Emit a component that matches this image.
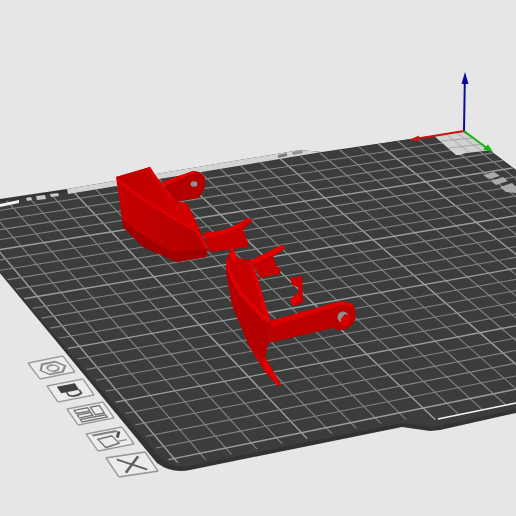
import React from "react";

type Pt = [number, number];

// bed corners on screen: left, origin, right, front
const corners: Pt[] = [
  [-54, 209],
  [464, 131],
  [760, 353],
  [167, 475],
];

// solve the projective map from the unit square to the bed quad
function makeHomography(q: Pt[]) {
  const [[x0, y0], [x1, y1], [x2, y2], [x3, y3]] = q;
  const dx1 = x1 - x2;
  const dx2 = x3 - x2;
  const dx3 = x0 - x1 + x2 - x3;
  const dy1 = y1 - y2;
  const dy2 = y3 - y2;
  const dy3 = y0 - y1 + y2 - y3;
  const det = dx1 * dy2 - dx2 * dy1;
  const g = (dx3 * dy2 - dx2 * dy3) / det;
  const h = (dx1 * dy3 - dx3 * dy1) / det;
  const a = x1 - x0 + g * x1;
  const b = x3 - x0 + h * x3;
  const d = y1 - y0 + g * y1;
  const e = y3 - y0 + h * y3;
  return (u: number, v: number): Pt => {
    const w = g * u + h * v + 1;
    return [(a * u + b * v + x0) / w, (d * u + e * v + y0) / w];
  };
}

const bed = makeHomography(corners);

function GridLines() {
  const lines: React.ReactNode[] = [];
  // spacing and offset measured off the reference
  for (let k = 0; k < 25; k++) {
    const u = 0.0271 + 0.0397 * k;
    const [ax, ay] = bed(u, 0);
    const [bx, by] = bed(u, 1);
    const major = k % 5 === 0;
    lines.push(
      <line key={`c${k}`} x1={ax} y1={ay} x2={bx} y2={by} stroke={major ? "#9c9e9d" : "#828483"} strokeWidth={major ? 1.4 : 1.1} />
    );
  }
  for (let k = 1; k < 26; k++) {
    const v = 0.0384 * k;
    const [ax, ay] = bed(0, v);
    const [bx, by] = bed(1, v);
    const major = k % 5 === 0;
    lines.push(
      <line key={`r${k}`} x1={ax} y1={ay} x2={bx} y2={by} stroke={major ? "#9c9e9d" : "#828483"} strokeWidth={major ? 1.4 : 1.1} />
    );
  }
  return <g filter="url(#faint)">{lines}</g>;
}

// one tilted button of the left toolbar, drawn in a local 40x20 box
function ToolButton({ m, children }: { m: string; children: React.ReactNode }) {
  return (
    <g transform={`matrix(${m})`}>
      <rect x="0" y="0" width="40" height="20" fill="#ececec" stroke="#989898" strokeWidth="1.6" rx="1" />
      {children}
    </g>
  );
}

function Toolbar() {
  return (
    <g filter="url(#soft)">
      <ToolButton m="0.875 -0.175 0.6 0.8 28 363">
        <polygon points="7,11 13,4.5 28,4.5 35,11 28,17 13,17" fill="none" stroke="#8c8c8c" strokeWidth="2" />
        <ellipse cx="21" cy="11" rx="6" ry="3.6" fill="none" stroke="#8c8c8c" strokeWidth="1.8" />
      </ToolButton>
      <ToolButton m="0.9 -0.175 0.55 0.8 47 386">
        <path d="M9 3 H29 V11 H9 Z" fill="#3f3f3f" />
        <path d="M15 11 V15 Q21 19 29 15 V11" fill="none" stroke="#4f4f4f" strokeWidth="2" />
      </ToolButton>
      <ToolButton m="0.9 -0.175 0.55 0.8 67 409">
        <rect x="6" y="3" width="15" height="4" fill="none" stroke="#707070" strokeWidth="1.5" />
        <rect x="6" y="9" width="15" height="3.4" fill="none" stroke="#707070" strokeWidth="1.5" />
        <rect x="24" y="3" width="10" height="9.4" fill="none" stroke="#707070" strokeWidth="1.5" />
        <rect x="6" y="14.5" width="28" height="3" fill="none" stroke="#707070" strokeWidth="1.5" />
      </ToolButton>
      <ToolButton m="0.9 -0.175 0.6 0.85 86 434">
        <path d="M5 3 H32" stroke="#808080" strokeWidth="2.2" />
        <polygon points="8,8 24,7 26,16 10,18" fill="none" stroke="#707070" strokeWidth="1.6" />
        <path d="M28 10 L34 4" stroke="#4f4f4f" strokeWidth="2.6" />
        <path d="M27 14 H36" stroke="#909090" strokeWidth="1.6" />
      </ToolButton>
      <ToolButton m="0.975 -0.15 0.65 0.95 106 458">
        <path d="M9 3 L31 17 M31 3 L9 17" stroke="#606060" strokeWidth="2" />
      </ToolButton>
    </g>
  );
}

function Bed() {
  const outline =
    "M-54 208 L0 199 L67 189 L300 150 L322 152 L464 131 L760 353 L516 413 L440 430 L430 431 L402 427 L190 470 Q172 474 157 463 Z";
  const face =
    "M-54 210 L464 131 L760 353 L516 409 L440 426 L430 427 L402 423 L190 466 Q174 469 161 459 Z";
  return (
    <g>
      <path d={outline} fill="#313332" />
      <path d={face} fill="#3b3d3c" />
      <clipPath id="bedclip">
        <path d="M-54 210 L464 131 L760 353 L516 405 L440 422 L430 423 L402 419 L190 463 Q176 465 164 457 Z" />
      </clipPath>
      <g clipPath="url(#bedclip)">
        <GridLines />
      </g>
      {/* corner patch beside the axes */}
      <polygon points="433,135 463,132 493,150 466,153 460,155 456,155" fill="#d0d2d0" />
      <g stroke="#a6a8a7" strokeWidth="1">
        <line x1="446" y1="134" x2="470" y2="153" />
        <line x1="457" y1="133" x2="482" y2="151" />
        <line x1="441" y1="141" x2="474" y2="138" />
        <line x1="449" y1="148" x2="484" y2="144" />
      </g>
      {/* strip along the back edge */}
      <polygon points="67,189 300,150 322,152 68,194" fill="#d2d4d2" />
      <polygon points="278,155 287,153 287,156 278,158" fill="#555" opacity="0.7" />
      <polygon points="292,152 302,150 303,153 293,155" fill="#777" opacity="0.7" />
      <polygon points="0,204 19,200 19,203 0,207" fill="#f4f4f4" />
      <g fill="#c8c8c8" filter="url(#soft)">
        <polygon points="26,198 31,197 32,200 27,201" />
        <polygon points="36,196 45,195 46,199 37,200" />
        <polygon points="50,194 58,193 59,196 51,197" />
      </g>
      {/* label on the right side of the bed */}
      <g fill="#a9abaa" filter="url(#soft)">
        <polygon points="483,175 494,172 500,176 489,179" />
        <polygon points="491,181 503,177 508,181 496,185" />
        <polygon points="500,187 512,183 516,187 516,193 506,192" />
      </g>
      {/* white mark near the front */}
      <line x1="438" y1="419" x2="516" y2="403" stroke="#f5f5f5" strokeWidth="1.6" />
    </g>
  );
}

function PartOne() {
  return (
    <g filter="url(#faint)">
      {/* ear */}
      <path d="M162 182 L193 171 Q203 171 205 179 Q207 190 198 198 L176 202 Z" fill="#b40000" />
      <path d="M162 182 L193 171 L196 172 L165 186 Z" fill="#dc0000" />
      <ellipse cx="194" cy="184" rx="3.4" ry="2.8" fill="#8f9190" />
      {/* arm */}
      <path d="M203 233 Q228 232 247 218 L253 220 L243 230 L248 242 L248 247 L210 252 Z" fill="#c60000" />
      <path d="M203 233 Q228 232 247 218 L253 220 L246 222 Q228 236 205 238 Z" fill="#e00000" />
      {/* body */}
      <path d="M116 177 L150 167 L155 175 L176 202 L187 203 L208 248 L206 257 L177 262 L143 247 L123 227 Z" fill="url(#lower)" />
      <path d="M116 177 L150 167 L155 175 L176 202 L187 203 L200 230 L193 228 Q150 205 117 178 Z" fill="url(#upper)" />
      <path d="M122 218 Q145 240 173 252 L207 248 L206 257 L177 262 L143 247 L123 227 Z" fill="#a20000" />
      <path d="M117 178 Q150 205 200 232 L208 248 L206 250 L196 232 Q150 208 117 181 Z" fill="#e40000" />
      <path d="M150 167 L155 175 L176 202 L173 202 L148 169 Z" fill="#e20000" />
    </g>
  );
}

function PartTwo() {
  return (
    <g filter="url(#faint)">
      {/* upper arm */}
      <path d="M252 260 L282 245 L285 248 L273 257 L277 267 L281 268 L280 274 L260 278 Z" fill="#c40000" />
      <path d="M252 260 L282 245 L285 248 L254 264 Z" fill="#e60000" />
      {/* small clip */}
      <path d="M290 278 L302 276 L303 303 L293 306 L290 300 L298 293 L298 287 L292 285 Z" fill="#c80000" />
      <path d="M290 300 L298 293 L299 297 L293 306 Z" fill="#e40000" />
      {/* long arm with the hole */}
      <path d="M270 321 L337 302 Q348 300 354 306 Q358 318 353 323 Q348 331 338 330 L333 328 L268 343 Z" fill="#bc0000" />
      <path d="M270 321 L337 302 Q348 300 354 306 L350 307 Q344 304 336 306 L272 327 Z" fill="#dc0000" />
      <ellipse cx="343" cy="317" rx="5.5" ry="5.5" fill="#8d8f8e" />
      <polygon points="341,319 345,314 350,316 350,321 346,325 341,324" fill="#dc0000" />
      {/* body */}
      <path d="M232 247 L233 247 L237 258 L252 260 L270 320 L268 343 L265 357 L281 385 L278 386 L265 372 L250 348 L232 305 L226 272 L227 258 Z" fill="#c40000" />
      <path d="M227 258 Q232 290 270 322 L268 343 L265 357 L250 348 L232 305 L226 272 Z" fill="#b40000" />
      <path d="M227 258 Q232 290 270 320 L268 323 Q230 292 226 262 Z" fill="#e40000" />
      <path d="M252 260 L270 320 L267 320 L249 261 Z" fill="#e40000" />
      <path d="M232 247 L233 247 L237 258 L235 264 L230 256 Z" fill="#e40000" />
      <path d="M265 357 L281 385 L278 386 L264 368 Z" fill="#e00000" />
    </g>
  );
}

function Axes() {
  return (
    <g>
      <line x1="464" y1="131" x2="464.8" y2="80" stroke="#0a0a9e" strokeWidth="2" />
      <polygon points="465,72 468.5,84 461.5,84" fill="#0a0a9e" />
      <line x1="464" y1="131" x2="415" y2="139" stroke="#cc1414" strokeWidth="2" />
      <polygon points="409,140 419,135.5 419,141.5" fill="#cc1414" />
      <line x1="464" y1="131" x2="488" y2="149" stroke="#16b416" strokeWidth="2" />
      <polygon points="493,152 483,149.5 488,144.5" fill="#16b416" />
    </g>
  );
}

export default function App() {
  return (
    <div className="w-[516px] h-[516px] overflow-hidden bg-[#e6e6e6]">
      <svg width="516" height="516" viewBox="0 0 516 516" className="block">
        <defs>
          <filter id="soft" x="-10%" y="-10%" width="120%" height="120%">
            <feGaussianBlur stdDeviation="0.5" />
          </filter>
          <filter id="faint" x="-5%" y="-5%" width="110%" height="110%">
            <feGaussianBlur stdDeviation="0.3" />
          </filter>
          <linearGradient id="upper" x1="0" y1="0" x2="1" y2="1">
            <stop offset="0" stopColor="#bc0000" />
            <stop offset="1" stopColor="#d60000" />
          </linearGradient>
          <linearGradient id="lower" x1="0" y1="0" x2="1" y2="0">
            <stop offset="0" stopColor="#c80000" />
            <stop offset="1" stopColor="#b00000" />
          </linearGradient>
        </defs>
        <Bed />
        <Toolbar />
        <PartOne />
        <PartTwo />
        <Axes />
      </svg>
    </div>
  );
}
